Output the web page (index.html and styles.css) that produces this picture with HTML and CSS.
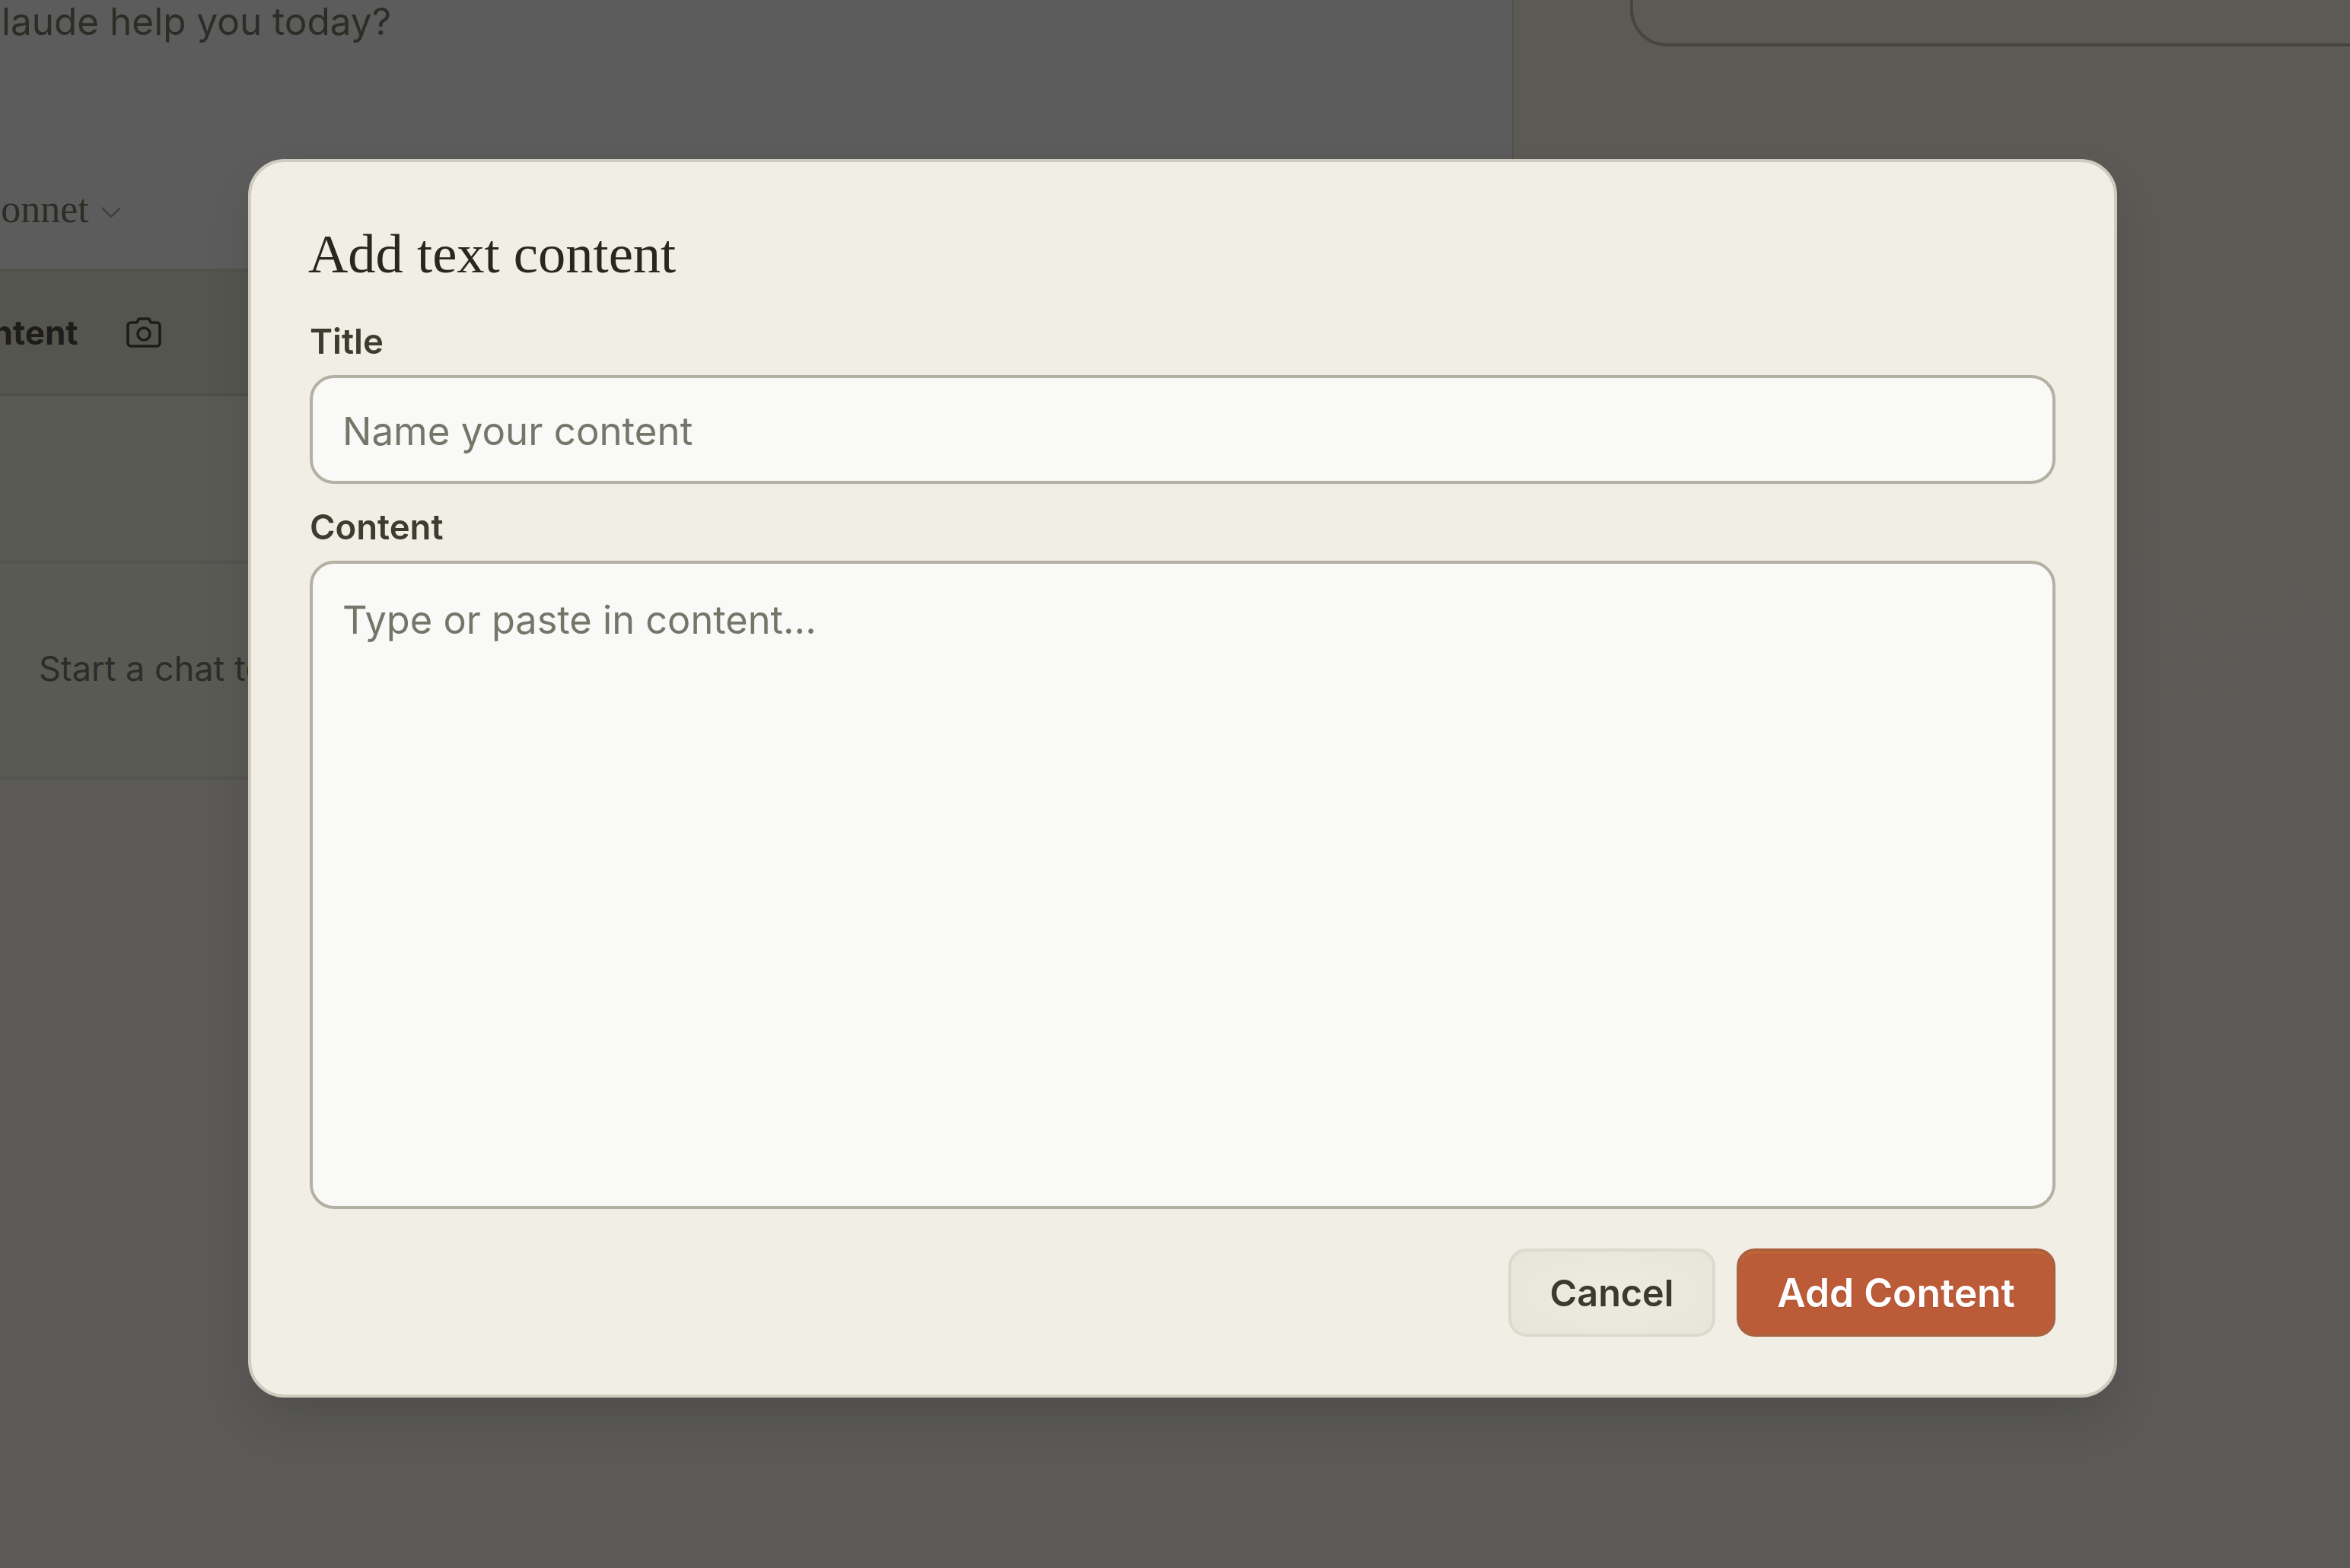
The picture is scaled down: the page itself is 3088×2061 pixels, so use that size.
FILE: index.html
```html
<!DOCTYPE html>
<html lang="en">

<head>
    <meta charset="UTF-8">
    <title>Add text content</title>
    <link rel="stylesheet" href="styles.css">
</head>

<body>
    <div class="app">
        <section class="chat">
            <div class="composer">
                <p class="prompt">How can Claude help you today?</p>
                <div class="model">
                    <span>Claude 3.5 Sonnet</span>
                    <svg class="chevron" viewBox="0 0 26 14" fill="none" stroke="currentColor" stroke-width="2.2">
                        <path d="M1 1l12 12L25 1" />
                    </svg>
                </div>
            </div>
            <div class="attach-bar">
                <span>Add content</span>
                <svg class="camera" viewBox="0 0 46 40" fill="none" stroke="currentColor" stroke-width="3.6"
                    stroke-linejoin="round">
                    <path
                        d="M2 11a4 4 0 0 1 4-4h7.5l3-5h13l3 5H40a4 4 0 0 1 4 4v23a4 4 0 0 1-4 4H6a4 4 0 0 1-4-4z" />
                    <circle cx="23" cy="22" r="8" />
                </svg>
            </div>
            <div class="spacer-row"></div>
            <div class="hint-row">
                <p>Start a chat to keep things going</p>
            </div>
        </section>
        <aside class="side">
            <div class="side-box"></div>
        </aside>
    </div>

    <div class="overlay">
        <form class="modal">
            <h2>Add text content</h2>
            <label class="field-label" for="title">Title</label>
            <input class="field" id="title" type="text" placeholder="Name your content">
            <label class="field-label second" for="content">Content</label>
            <textarea class="field area" id="content" placeholder="Type or paste in content..."></textarea>
            <div class="actions">
                <button class="btn cancel" type="button">Cancel</button>
                <button class="btn primary" type="button">Add Content</button>
            </div>
        </form>
    </div>
</body>

</html>
```

FILE: styles.css
```css
* {
    box-sizing: border-box;
}

html,
body {
    margin: 0;
    height: 100%;
    overflow: hidden;
}

body {
    background-color: #5b5a58;
    font-family: "Inter", "Liberation Sans", sans-serif;
}

.app {
    display: flex;
    height: 1500px;
    background: linear-gradient(#5b5a54, #5b5a56 70%, #5b5a58);
}

.chat {
    width: 1989px;
    flex: none;
    border-right: 2px solid #52514d;
    overflow: hidden;
    white-space: nowrap;
    color: #2d2d27;
}

.composer {
    height: 353px;
    background-color: #5c5c5c;
    overflow: hidden;
}

.prompt {
    margin: 0 0 0 -254px;
    font-size: 49.5px;
    line-height: 56px;
    text-align: left;
}

.model {
    display: flex;
    align-items: center;
    gap: 16px;
    margin: 189px 0 0 -266px;
    font-family: "Liberation Serif", serif;
    font-size: 52px;
    line-height: 60px;
}

.chevron {
    width: 26px;
    height: 14px;
    color: #3c3c38;
    margin-top: 8px;
}

.attach-bar {
    display: flex;
    align-items: center;
    gap: 64px;
    height: 168px;
    background-color: #555550;
    border-top: 4px solid #52524e;
    border-bottom: 4px solid #4f4f4a;
    color: #1d1c18;
    font-size: 44px;
    font-weight: 700;
}

.attach-bar span {
    margin-left: -161px;
}

.camera {
    width: 46px;
    height: 40px;
}

.spacer-row {
    height: 220px;
    background-color: #5a5a55;
    border-bottom: 4px solid #535350;
}

.hint-row {
    height: 284px;
    padding: 0 0 6px 51px;
    background-color: #5a5a55;
    border-bottom: 4px solid #535350;
    display: flex;
    align-items: center;
    font-size: 45px;
}

.hint-row p {
    margin: 0;
}

.side {
    flex: 1;
    padding-left: 153px;
    overflow: hidden;
}

.side-box {
    height: 61px;
    width: 1100px;
    border: 4px solid #464540;
    border-top: 0;
    border-bottom-left-radius: 48px;
}

.overlay {
    position: fixed;
    inset: 0;
    display: flex;
    align-items: flex-start;
    padding: 209px 0 0 326px;
}

.modal {
    width: 2456px;
    height: 1628px;
    display: flex;
    flex-direction: column;
    padding: 81px 77px 0;
    background-color: #f1eee5;
    border: 4px solid #cfccbf;
    border-radius: 48px;
    box-shadow: 0 32px 70px -12px rgba(0, 0, 0, .16);
}

.modal h2 {
    margin: 0 0 50px -2px;
    font-family: "Liberation Serif", serif;
    font-size: 72.5px;
    font-weight: 400;
    line-height: 80px;
    color: #29271f;
}

.field-label {
    margin-bottom: 19px;
    font-size: 45.5px;
    font-weight: 600;
    line-height: 50px;
    color: #3d3c2f;
}

.second {
    margin-top: 32px;
}

.field {
    width: 100%;
    height: 143px;
    flex: none;
    padding: 3px 39px 0;
    font-family: inherit;
    font-size: 51px;
    color: #3d3c2f;
    background-color: #f9f9f7;
    border: 4px solid #b3b1a3;
    border-radius: 32px;
    outline: none;
}

.field::placeholder {
    color: #75756a;
    opacity: 1;
}

.area {
    height: 852px;
    padding-top: 44px;
    font-size: 50.5px;
    line-height: 60px;
    resize: none;
}

.actions {
    display: flex;
    justify-content: flex-end;
    gap: 28px;
    margin-top: 52px;
}

.btn {
    height: 116px;
    font-family: inherit;
    font-weight: 600;
    border-radius: 24px;
    border: 4px solid;
}

.cancel {
    width: 272px;
    font-size: 48.5px;
    color: #3a3a2e;
    background: radial-gradient(ellipse at center, #eeecdf, #e7e5d8);
    border-color: #dcdacb;
}

.primary {
    width: 419px;
    font-size: 51.5px;
    color: #fff;
    background-color: #bc5b38;
    border-color: #a86242;
    border-top-color: #aa5f3e;
    box-shadow: inset 0 2px 0 #c26c32;
    text-shadow: 0 1px 2px rgba(0, 0, 0, .12);
}
```
